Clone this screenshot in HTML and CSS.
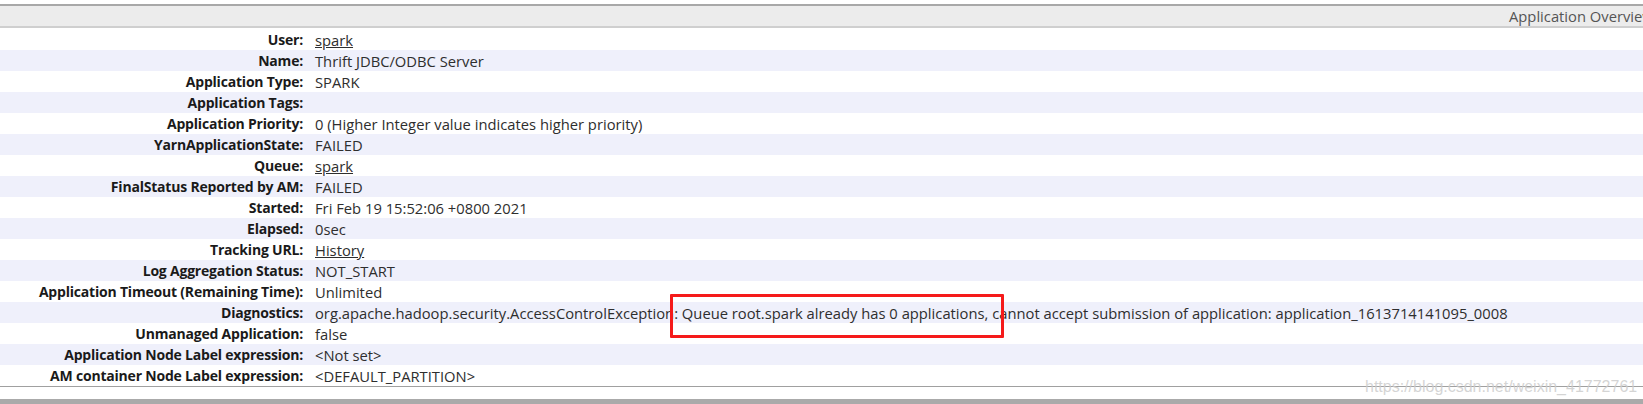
FILE: index.html
```html
<!DOCTYPE html>
<html>
<head>
<meta charset="utf-8">
<title>Application Overview</title>
<link rel="stylesheet" href="styles.css">
</head>
<body>
<div class="page">
  <div class="header"><span class="caption">Application Overview</span></div>
  <div class="info">
    <div class="row"><div class="label">User:</div><div class="value"><a href="#">spark</a></div></div>
    <div class="row odd"><div class="label">Name:</div><div class="value">Thrift JDBC/ODBC Server</div></div>
    <div class="row"><div class="label">Application Type:</div><div class="value">SPARK</div></div>
    <div class="row odd"><div class="label">Application Tags:</div><div class="value"></div></div>
    <div class="row"><div class="label">Application Priority:</div><div class="value">0 (Higher Integer value indicates higher priority)</div></div>
    <div class="row odd"><div class="label">YarnApplicationState:</div><div class="value">FAILED</div></div>
    <div class="row"><div class="label">Queue:</div><div class="value"><a href="#">spark</a></div></div>
    <div class="row odd"><div class="label">FinalStatus Reported by AM:</div><div class="value">FAILED</div></div>
    <div class="row"><div class="label">Started:</div><div class="value">Fri Feb 19 15:52:06 +0800 2021</div></div>
    <div class="row odd"><div class="label">Elapsed:</div><div class="value">0sec</div></div>
    <div class="row"><div class="label">Tracking URL:</div><div class="value"><a href="#">History</a></div></div>
    <div class="row odd"><div class="label">Log Aggregation Status:</div><div class="value">NOT_START</div></div>
    <div class="row"><div class="label">Application Timeout (Remaining Time):</div><div class="value">Unlimited</div></div>
    <div class="row odd"><div class="label">Diagnostics:</div><div class="value">org.apache.hadoop.security.AccessControlException: Queue root.spark already has 0 applications, cannot accept submission of application: application_1613714141095_0008</div></div>
    <div class="row"><div class="label">Unmanaged Application:</div><div class="value">false</div></div>
    <div class="row odd"><div class="label">Application Node Label expression:</div><div class="value">&lt;Not set&gt;</div></div>
    <div class="row"><div class="label">AM container Node Label expression:</div><div class="value">&lt;DEFAULT_PARTITION&gt;</div></div>
  </div>
  <div class="bottom-line"></div>
  <div class="spacer"></div>
  <div class="bottom-bar"></div>
  <div class="highlight"></div>
  <div class="watermark">https://blog.csdn.net/weixin_41772761</div>
</div>
</body>
</html>
```
FILE: styles.css
```css
html, body {
  margin: 0;
  padding: 0;
  background: #ffffff;
}
body {
  font-family: "Open Sans", "Noto Sans", sans-serif;
  font-size: 14.75px;
  color: #333333;
  width: 1643px;
  height: 404px;
  overflow: hidden;
}
.page {
  position: relative;
  padding-top: 4px;
}
.header {
  height: 20px;
  border-top: 2px solid #a8a8a8;
  border-bottom: 2px solid #cfcfcf;
  background: #ececec;
  display: flex;
  align-items: center;
  overflow: hidden;
  white-space: nowrap;
  padding-left: 1509px;
}
.caption {
  color: #555555;
}
.info {
  margin-top: 1px;
  display: flex;
  flex-direction: column;
}
.row {
  height: 21px;
  display: flex;
  align-items: center;
  white-space: nowrap;
}
.row.odd {
  background: #eff0fb;
}
.label {
  width: 303px;
  flex: none;
  text-align: right;
  font-size: 14px;
  font-weight: 700;
  letter-spacing: -0.2px;
  color: #1a1a1a;
}
.value {
  padding-left: 12px;
  color: #2e2e2e;
}
.value a {
  color: #2e2e2e;
  text-decoration: underline;
}
.bottom-line {
  margin-top: 0;
  height: 1px;
  background: #a0a0a0;
}
.spacer {
  height: 12px;
}
.bottom-bar {
  height: 5px;
  background: #aaaaaa;
}
.highlight {
  position: absolute;
  left: 670px;
  top: 294px;
  width: 328px;
  height: 38px;
  border: 3px solid #f51a1a;
  border-radius: 1px;
}
.watermark {
  position: absolute;
  left: 1365px;
  top: 378px;
  font-family: "Liberation Sans", Arial, sans-serif;
  font-size: 16px;
  color: rgba(205, 205, 205, 0.85);
  white-space: nowrap;
}
```
